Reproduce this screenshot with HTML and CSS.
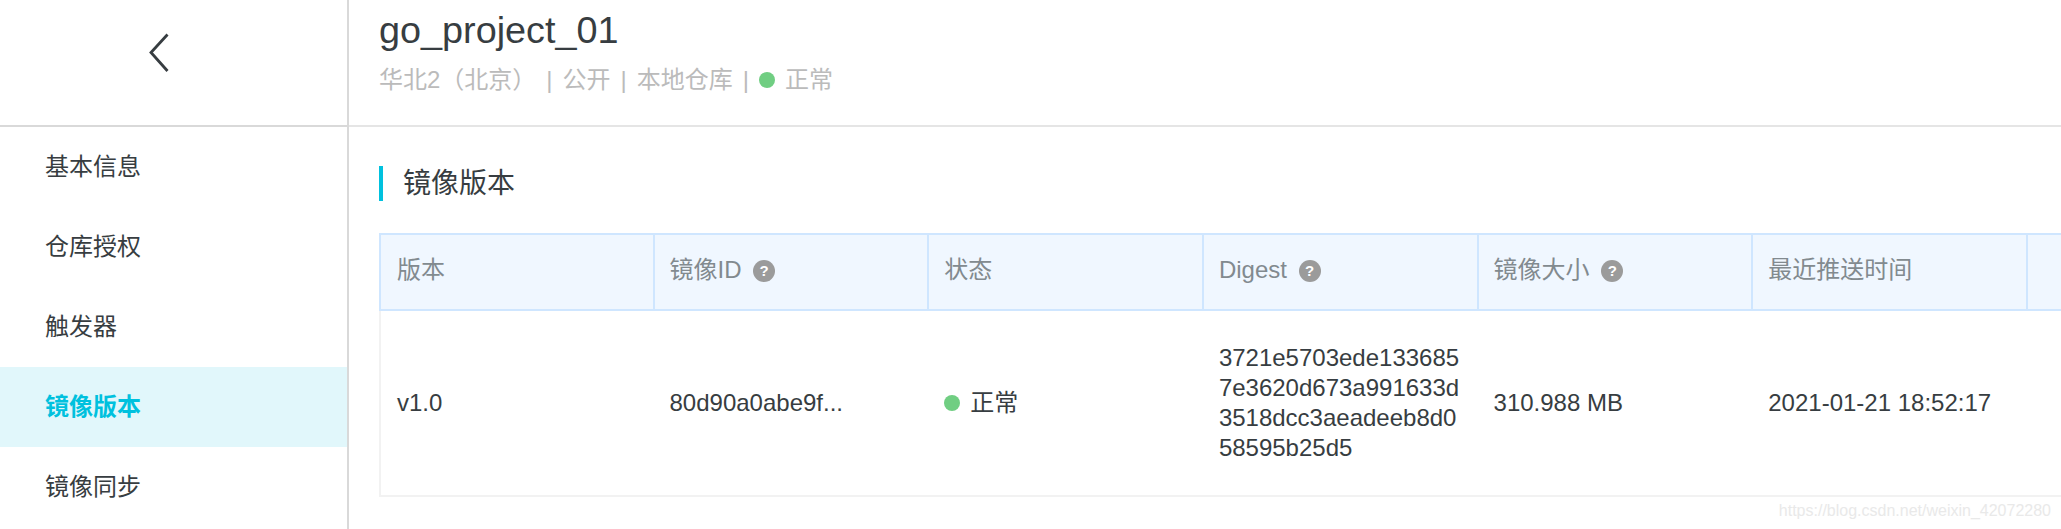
FILE: index.html
```html
<!DOCTYPE html>
<html lang="zh-CN">
<head>
    <meta charset="UTF-8">
    <title>镜像版本</title>
    <link rel="stylesheet" href="styles.css">
</head>
<body>
    <div class="page">
        <div class="sidebar">
            <div class="back">
                <svg class="back-icon" width="20" height="40" viewBox="0 0 20 40">
                    <path d="M18.5 1.5 L2 19.5 L18.5 38" fill="none" stroke="#373d41" stroke-width="2.8"/>
                </svg>
            </div>
            <ul class="menu">
                <li>基本信息</li>
                <li>仓库授权</li>
                <li>触发器</li>
                <li class="active">镜像版本</li>
                <li>镜像同步</li>
            </ul>
        </div>
        <div class="main">
            <div class="header">
                <h1>go_project_01</h1>
                <div class="meta">
                    <span>华北2（北京）</span><i>|</i><span>公开</span><i>|</i><span>本地仓库</span><i>|</i><span class="dot"></span><span>正常</span>
                </div>
            </div>
            <div class="content">
                <h2 class="section-title">镜像版本</h2>
                <table class="versions">
                    <thead>
                        <tr>
                            <th>版本</th>
                            <th>镜像ID <span class="help">?</span></th>
                            <th>状态</th>
                            <th>Digest <span class="help">?</span></th>
                            <th>镜像大小 <span class="help">?</span></th>
                            <th>最近推送时间</th>
                            <th class="rest"></th>
                        </tr>
                    </thead>
                    <tbody>
                        <tr>
                            <td>v1.0</td>
                            <td>80d90a0abe9f...</td>
                            <td><span class="dot"></span>正常</td>
                            <td class="digest">3721e5703ede1336857e3620d673a991633d3518dcc3aeadeeb8d058595b25d5</td>
                            <td>310.988 MB</td>
                            <td>2021-01-21 18:52:17</td>
                            <td class="rest"></td>
                        </tr>
                    </tbody>
                </table>
            </div>
        </div>
    </div>
    <div class="watermark">https://blog.csdn.net/weixin_42072280</div>
</body>
</html>
```

FILE: styles.css
```css
body {
    margin: 0;
    overflow: hidden;
    background-color: #fff;
    color: #373d41;
    font-family: "Liberation Sans", "Noto Sans CJK SC", sans-serif;
    font-size: 24px;
}
.page {
    display: flex;
    height: 529px;
}
.sidebar {
    flex: 0 0 347px;
    border-right: 2px solid #d9d9d9;
}
.back {
    display: flex;
    align-items: center;
    justify-content: center;
    box-sizing: border-box;
    height: 127px;
    padding-bottom: 20px;
    border-bottom: 2px solid #d9d9d9;
}
.back-icon {
    margin-left: -29px;
}
.menu {
    margin: 0;
    padding: 0;
    list-style: none;
}
.menu li {
    height: 80px;
    line-height: 80px;
    padding-left: 45px;
}
.menu li.active {
    background-color: #e1f7fb;
    color: #00c1de;
    font-weight: bold;
}
.main {
    flex: 1;
    min-width: 0;
}
.header {
    box-sizing: border-box;
    height: 127px;
    padding: 7px 0 0 30px;
    border-bottom: 2px solid #e5e5e5;
}
.header h1 {
    margin: 0;
    font-size: 37.8px;
    font-weight: normal;
    line-height: 46px;
}
.meta {
    display: flex;
    align-items: center;
    margin-top: 10px;
    color: #bbb;
    line-height: 34px;
}
.meta i {
    font-style: normal;
    margin: 0 10px;
}
.dot {
    display: inline-block;
    width: 16px;
    height: 16px;
    margin-right: 10px;
    border-radius: 50%;
    background-color: #70ce82;
}
.content {
    padding: 39px 0 0 30px;
}
.section-title {
    margin: 0 0 32px;
    padding-left: 20px;
    border-left: 4px solid #00c1de;
    font-size: 28px;
    font-weight: normal;
    line-height: 35px;
}
.versions {
    width: 100%;
    table-layout: fixed;
    border-collapse: separate;
    border-spacing: 0;
}
.versions th,
.versions td {
    box-sizing: border-box;
    padding: 0 15px;
}
.versions th:first-child,
.versions td:first-child {
    padding-left: 16px;
}
.versions th {
    width: 274.7px;
    height: 78px;
    padding-bottom: 4px;
    background-color: #f0f7ff;
    border-top: 2px solid #cfe6ff;
    border-right: 2px solid #cfe6ff;
    border-bottom: 2px solid #cfe6ff;
    color: #828a8f;
    font-weight: normal;
    line-height: 34px;
    text-align: left;
}
.versions th:first-child {
    width: 275.5px;
    border-left: 2px solid #cfe6ff;
}
.versions th.rest {
    width: auto;
    border-right: 0;
}
.versions td {
    height: 186px;
    line-height: 30px;
    border-bottom: 2px solid #f2f2f2;
}
.versions td:first-child {
    border-left: 2px solid #f2f2f2;
}
.digest {
    word-break: break-all;
}
.help {
    display: inline-block;
    width: 22px;
    height: 22px;
    margin-left: 5px;
    border-radius: 50%;
    background-color: #9b9b9b;
    color: #fff;
    font-size: 15px;
    font-weight: bold;
    line-height: 22px;
    text-align: center;
    vertical-align: 2px;
}
.watermark {
    position: absolute;
    right: 10px;
    top: 500px;
    color: #e9e9e9;
    font-size: 16px;
    line-height: 22px;
}
```
